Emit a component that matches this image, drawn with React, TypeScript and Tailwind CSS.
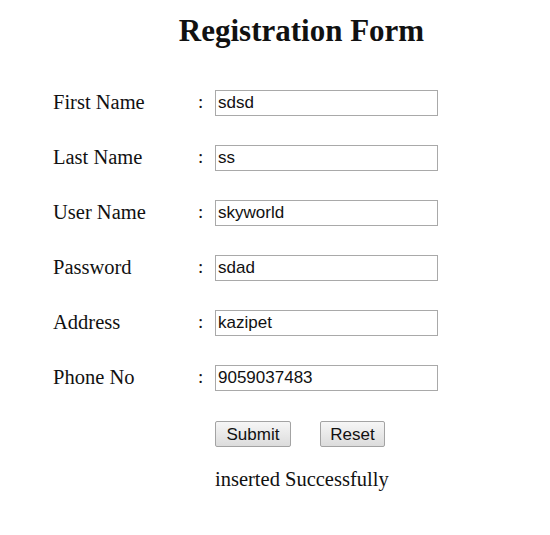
export default function App() {
  const fields = [
    { label: 'First Name', value: 'sdsd' },
    { label: 'Last Name', value: 'ss' },
    { label: 'User Name', value: 'skyworld' },
    { label: 'Password', value: 'sdad' },
    { label: 'Address', value: 'kazipet' },
    { label: 'Phone No', value: '9059037483' },
  ]

  return (
    <div className="w-[550px] h-[535px] bg-white text-[#111] pl-[53px]" style={{ fontFamily: '"Liberation Serif", "Times New Roman", serif' }}>
      {/* Title */}
      <h1 className="pt-[12px] h-[75px] text-center text-[31px] font-bold leading-[37px]">Registration Form</h1>

      {/* Fields */}
      <div className="flex flex-col">
        {fields.map((f) => (
          <div key={f.label} className="flex items-center h-[55px]">
            <div className="w-[145px] text-[20.5px]">{f.label}</div>
            <div className="w-[17px] text-[19px]">:</div>
            <input
              readOnly
              value={f.value}
              className="w-[223px] h-[26px] border border-[#a9a9a9] px-[2px] text-[17px] text-[#111] outline-none"
              style={{ fontFamily: '"Liberation Sans", Arial, sans-serif' }}
            />
          </div>
        ))}
      </div>

      {/* Buttons */}
      <div className="flex gap-[29px] ml-[162px] mt-[16px]" style={{ fontFamily: '"Liberation Sans", Arial, sans-serif' }}>
        <button className="w-[76px] h-[26px] text-[17px] border border-[#a3a3a3] rounded-[2px] bg-gradient-to-b from-[#f6f6f6] to-[#dcdcdc] text-[#111]">Submit</button>
        <button className="w-[65px] h-[26px] text-[17px] border border-[#a3a3a3] rounded-[2px] bg-gradient-to-b from-[#f6f6f6] to-[#dcdcdc] text-[#111]">Reset</button>
      </div>

      <div className="ml-[162px] mt-[17px] text-[20.5px]">inserted Successfully</div>
    </div>
  )
}
